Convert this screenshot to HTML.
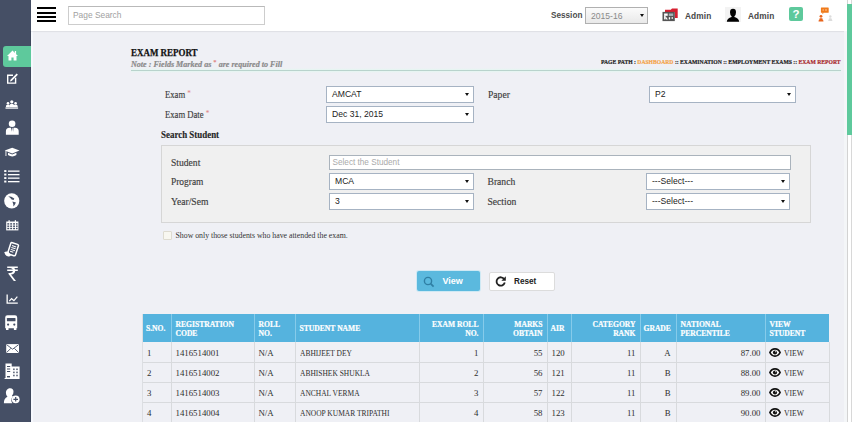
<!DOCTYPE html>
<html><head><meta charset="utf-8">
<style>
*{margin:0;padding:0;box-sizing:border-box}
html,body{width:852px;height:422px;overflow:hidden;background:#eff0f5;font-family:"Liberation Serif",serif;color:#333}
.a{position:absolute}
.sx{display:inline-block;transform-origin:0 0;white-space:nowrap}
#side{left:0;top:0;width:31px;height:422px;background:#454f65}
#top{left:31px;top:0;width:816px;height:31px;background:#fff;box-shadow:0 1px 1px rgba(0,0,0,.06)}
.sans{font-family:"Liberation Sans",sans-serif}
.sel{background:#fff;border:1px solid #a6b3c3;font-family:"Liberation Sans",sans-serif;font-size:8.6px;color:#222;padding-left:5px;line-height:15px;white-space:nowrap}
.sel.dd:after{content:"";position:absolute;right:4px;top:5.8px;border-left:2.1px solid transparent;border-right:2.1px solid transparent;border-top:3.8px solid #111}
.lbl{font-size:9.6px;color:#3d3d3d;white-space:nowrap;line-height:12px;-webkit-text-stroke:0.15px #3d3d3d}
.req{color:#e08080;font-size:8px;vertical-align:2px;-webkit-text-stroke:0}
table{border-collapse:collapse;table-layout:fixed}
th,td{font-family:"Liberation Serif",serif}
th{background:#55b3de;color:#fff;-webkit-text-stroke:0.2px #fff;font-weight:bold;font-size:7.6px;line-height:9px;text-align:left;padding:1px 4px 0 4px;border-right:1px solid #86cbea;height:28px;vertical-align:middle;white-space:nowrap}
td{font-size:8.8px;color:#2e2e2e;height:20px;padding:2px 4px 0 4px;border-right:1px solid #d8dadd;border-bottom:1px solid #d8dadd;white-space:nowrap}
.r{text-align:right}
.c{text-align:center}
.ic{position:absolute;fill:#fff}
</style></head><body>
<div id="side" class="a"></div>
<div class="a" style="left:29.5px;top:31px;width:1.5px;height:391px;background:#3e475b"></div><div class="a" style="left:31px;top:31px;width:2px;height:391px;background:#f6f8fd"></div>
<div class="a" style="left:3px;top:46px;width:28px;height:21px;background:#5ec99c;border-radius:3px 0 0 3px"></div>

<!-- sidebar icons -->
<svg class="ic" style="left:0;top:40px" width="31" height="370" viewBox="0 40 31 370">
 <!-- home -->
 <path d="M12.5 50.5 L18 56 L16.5 56 L16.5 60.5 L13.6 60.5 L13.6 57.6 L11.4 57.6 L11.4 60.5 L8.5 60.5 L8.5 56 L7 56 Z"/>
 <rect x="14.8" y="51" width="1.3" height="3"/>
 <!-- edit -->
 <path d="M7 74.5 h6 v1.4 h-4.6 v6.5 h6.5 v-4.6 h1.4 v6 h-9.3 z"/>
 <path d="M10.5 79.8 l6.2-6.2 l1.2 1.2 l-6.2 6.2 l-1.7 0.5 z"/>
 <!-- group -->
 <circle cx="11.8" cy="101.8" r="1.6"/><circle cx="8" cy="103.2" r="1.3"/><circle cx="15.6" cy="103.2" r="1.3"/>
 <path d="M9.3 107 q0-3.3 2.5-3.3 q2.5 0 2.5 3.3 z"/>
 <path d="M5.8 107 q0-2.4 2.2-2.4 q1.5 0 1.9 1.2 l-0.3 1.2 z"/>
 <path d="M17.8 107 q0-2.4 -2.2-2.4 q-1.5 0 -1.9 1.2 l0.3 1.2 z"/>
 <rect x="5.5" y="107.4" width="12.6" height="1.3"/>
 <!-- user -->
 <circle cx="12.1" cy="123.8" r="3.3"/>
 <path d="M5.9 134.7 v-3.5 q0-3 3.6-3.4 l1.6 0 l0.4 4 l0.6 -4 l0.4 0 l0.6 4 l0.4 -4 l1.6 0 q3.6 0.4 3.6 3.4 v3.5 z"/>
 <!-- grad cap -->
 <path d="M4.7 150.6 L12.2 147.8 L19.5 150.6 L12.2 153.4 Z"/>
 <path d="M8 152.8 v2.3 q4.2 2.6 8.4 0 v-2.3 l-4.2 1.6 z"/>
 <rect x="5.5" y="151" width="0.9" height="5"/>
 <!-- list -->
 <rect x="4.2" y="170.1" width="2.2" height="1.9"/><rect x="8" y="170.5" width="11.5" height="1.3"/>
 <rect x="4.2" y="173.6" width="2.2" height="1.9"/><rect x="8" y="174" width="11.5" height="1.3"/>
 <rect x="4.2" y="177.1" width="2.2" height="1.9"/><rect x="8" y="177.5" width="11.5" height="1.3"/>
 <rect x="4.2" y="180.6" width="2.2" height="1.9"/><rect x="8" y="181" width="11.5" height="1.3"/>
  <!-- globe -->
 <circle cx="11.75" cy="200.8" r="7.6"/>
 <path fill="#454f65" d="M8.2 196.2 L11.3 196.7 L14.3 198.6 L13.6 199.9 L11.6 199.5 L10.6 198.3 Z"/>
 <path fill="#454f65" d="M12.4 201.6 L15.9 202.6 L14.8 204.8 L13.4 206.4 L13.3 204.3 Z"/>
<!-- calendar -->
 <path d="M6.2 221.5 h12.2 v8.9 h-12.2 z" />
 <g fill="#454f65">
 <rect x="7.3" y="223.2" width="1.9" height="1.4"/><rect x="10.2" y="223.2" width="1.9" height="1.4"/><rect x="13.1" y="223.2" width="1.9" height="1.4"/><rect x="16" y="223.2" width="1.6" height="1.4"/>
 <rect x="7.3" y="225.5" width="1.9" height="1.4"/><rect x="10.2" y="225.5" width="1.9" height="1.4"/><rect x="13.1" y="225.5" width="1.9" height="1.4"/><rect x="16" y="225.5" width="1.6" height="1.4"/>
 <rect x="7.3" y="227.8" width="1.9" height="1.4"/><rect x="10.2" y="227.8" width="1.9" height="1.4"/><rect x="13.1" y="227.8" width="1.9" height="1.4"/><rect x="16" y="227.8" width="1.6" height="1.4"/>
 </g>
 <rect x="8.5" y="220.2" width="1.2" height="2"/><rect x="14.8" y="220.2" width="1.2" height="2"/>
  <!-- scroll doc -->
 <g transform="rotate(18 13 249.5)">
  <rect x="9" y="243.2" width="8" height="12" rx="1.3" fill="none" stroke="#fff" stroke-width="1.5"/>
  <rect x="10.8" y="245.6" width="4.4" height="1"/><rect x="10.8" y="247.6" width="4.4" height="1"/><rect x="10.8" y="249.6" width="4.4" height="1"/><rect x="10.8" y="251.6" width="3.4" height="1"/>
 </g>
 <path d="M4.2 252.3 q1.8 -1.4 4.2 -0.6 l2.6 3.2 q-0.8 1.8 -2.8 1.6 q-2.8 -0.4 -4 -4.2 z"/>
<!-- rupee -->
 <path d="M7.2 266.6 h10.6 v1.4 h-3.6 q0.8 0.7 1 1.6 h2.6 v1.4 h-2.6 q-0.4 3.2 -4.2 3.5 l5 6.6 h-2.2 l-5.3 -7 v-1 h1.7 q2.4 0 2.8 -2.1 h-5.8 v-1.4 h5.6 q-0.6 -1.4 -2.6 -1.6 h-3 z"/>
 <!-- chart -->
 <path d="M6.5 294.4 h1.3 v8.2 h10 v1.2 h-11.3 z"/>
 <path d="M8.8 300.8 l2.7-3 l2.4 2 l3-3.6 l0.9 0.8 l-3.8 4.5 l-2.4 -2 l-1.9 2.1 z"/>
  <!-- bus -->
 <path d="M7.4 315.2 h7.6 q2.2 0 2.2 2.2 v10.8 h-0.8 v1.8 h-2.5 v-1.8 h-5.4 v1.8 h-2.5 v-1.8 h-0.8 v-10.8 q0-2.2 2.2-2.2 z"/>
 <rect fill="#454f65" x="6.9" y="317.9" width="8.6" height="3.4" rx="0.6"/>
 <circle fill="#454f65" cx="8.1" cy="324.6" r="1.1"/><circle fill="#454f65" cx="14.3" cy="324.6" r="1.1"/>
<!-- envelope -->
 <path d="M6.2 344.1 h12.8 v8.9 h-12.8 z"/>
 <path fill="none" stroke="#454f65" stroke-width="0.9" d="M6.5 344.6 l6.1 4.6 l6.1 -4.6 M6.5 352.6 l4.3 -4.2 M18.7 352.6 l-4.3 -4.2"/>
 <!-- building -->
 <path d="M5.5 363.5 h6.2 v3 h7.9 v12.6 h-15 v-1.2 h0.9 z"/>
 <g fill="#454f65"><rect x="7" y="366" width="3.2" height="1"/><rect x="7" y="368.5" width="3.2" height="1"/><rect x="7" y="371" width="3.2" height="1"/><rect x="7" y="376" width="3" height="1.4"/>
 <rect x="13.2" y="368.5" width="1.4" height="1.6"/><rect x="16.3" y="368.5" width="1.4" height="1.6"/><rect x="13.2" y="371.6" width="1.4" height="1.6"/><rect x="16.3" y="371.6" width="1.4" height="1.6"/><rect x="13.2" y="374.7" width="1.4" height="1.6"/><rect x="16.3" y="374.7" width="1.4" height="1.6"/></g>
 <!-- user add -->
 <path d="M10.2 388.2 q3.3 0 3.3 3.6 q0 2.6 -1.6 4 l1 0.6 q-1.6 1.6 -1.6 3.8 q0 1.7 1 3 h-8.4 q-0.2 -4.6 3.6 -6.4 q-1.6 -1.4 -1.6 -4 q0 -3.6 3.3 -4.6 z"/>
 <circle cx="15.7" cy="399.3" r="3.9"/>
 <path fill="#454f65" d="M15.1 397 h1.2 v1.7 h1.7 v1.2 h-1.7 v1.7 h-1.2 v-1.7 h-1.7 v-1.2 h1.7 z"/>
</svg>

<div id="top" class="a"></div>
<!-- hamburger -->
<div class="a" style="left:37px;top:7.3px;width:19px;height:2px;background:#000"></div>
<div class="a" style="left:37px;top:11.6px;width:19px;height:2px;background:#000"></div>
<div class="a" style="left:37px;top:16px;width:19px;height:2px;background:#000"></div>
<div class="a" style="left:37px;top:20.4px;width:19px;height:2px;background:#000"></div>
<div class="a sans" style="left:68px;top:6px;width:197px;height:19px;border:1px solid #cdcdcd;border-top-color:#b9b9b9;font-size:8.4px;color:#a0a0a0;padding-left:4px;line-height:17px">Page Search</div>

<div class="a sans" style="left:551px;top:9.5px;font-size:8.2px;font-weight:bold;color:#4d4d4d;line-height:12px">Session</div>
<div class="a sans" style="left:585px;top:7px;width:63px;height:17px;border:1px solid #b0b0b0;background:linear-gradient(#fbfbfb,#e9e9e9);font-size:8.6px;color:#8a8a8a;padding-left:5px;line-height:16px">2015-16</div>
<div class="a" style="left:639.5px;top:13.5px;border-left:2px solid transparent;border-right:2px solid transparent;border-top:3.5px solid #111"></div>

<!-- school/bus icon -->
<svg class="a" style="left:660px;top:6px" width="22" height="18" viewBox="660 6 22 18">
 <path fill="#d61f30" d="M665 11.9 v-2.2 h5.8 l1.2 -1.1 h5.7 v9.3 h-2.9 v-6 z"/>
 <rect fill="#555" x="662.5" y="11.9" width="12.3" height="9.2"/>
 <rect fill="#fff" x="664.1" y="13.5" width="3.6" height="2.3"/>
 <rect fill="#fff" x="664.1" y="15.6" width="1.5" height="3.8"/>
 <path fill="#fff" d="M666.2 17 l1.6 2.6 h-1.5 l-1.2 -2 z"/>
 <rect fill="#a9b3b8" x="668.8" y="13.5" width="4.4" height="2.4"/>
 <rect fill="#fff" x="668.8" y="17.2" width="1.3" height="2.2"/><rect fill="#fff" x="671.6" y="17.2" width="1.3" height="1.6"/>
</svg>
<div class="a sans" style="left:685px;top:9.5px;font-size:8.3px;font-weight:bold;color:#474747;line-height:12px;letter-spacing:0.1px">Admin</div>
<!-- user silhouette -->
<div class="a" style="left:725px;top:7px;width:16px;height:15px;background:#f3f3f3"></div>
<svg class="a" style="left:725px;top:7px" width="16" height="15" viewBox="0 0 16 15">
 <path fill="#000" d="M8 1.8 q3 0 3 3.4 q0 2.6 -1.6 4 l0 0.8 q4.3 1 4.8 4.7 h-12.4 q0.5 -3.7 4.8 -4.7 l0 -0.8 q-1.6 -1.4 -1.6 -4 q0 -3.4 3 -3.4 z"/>
</svg>
<div class="a sans" style="left:748px;top:9.5px;font-size:8.3px;font-weight:bold;color:#474747;line-height:12px;letter-spacing:0.1px">Admin</div>
<div class="a" style="left:789px;top:7px;width:14px;height:14px;background:#5ec99c;border-radius:2px;color:#fff;font:bold 11.5px 'Liberation Sans',sans-serif;text-align:center;line-height:14px">?</div>
<!-- orange icon -->
<svg class="a" style="left:816px;top:6px" width="20" height="17" viewBox="816 6 20 17">
 <rect fill="#f07a1a" x="820.9" y="7.4" width="7.8" height="5.3" rx="0.5"/>
 <path fill="#f07a1a" d="M822.3 12.5 l0.2 1.8 l1.6 -1.8 z"/>
 <path fill="#f6a05a" d="M822.5 9 h1.5 v2 h-1.5z M825 9 h2 v2 h-2z"/>
 <circle fill="#e8651c" cx="821" cy="16.3" r="1.4"/>
 <path fill="#e8651c" d="M818.5 21.5 q0 -1.8 1.3 -2.5 l-0.5 -0.8 h3.4 l-0.5 0.8 q1.3 0.7 1.3 2.5 z"/>
 <circle fill="#dcdcdc" cx="830.3" cy="16.5" r="1.2"/>
 <path fill="#dcdcdc" d="M828.2 21.1 q0 -1.6 1 -2.3 l-0.3 -0.6 h2.8 l-0.3 0.6 q1 0.7 1 2.3 z"/>
</svg>

<!-- scrollbar -->
<div class="a" style="left:843.5px;top:31px;width:3.5px;height:391px;background:#f4f6f8"></div>
<div class="a" style="left:847px;top:0;width:5px;height:422px;background:#fff"></div>
<div class="a" style="left:847px;top:0;width:1px;height:422px;background:#d3d3d3"></div>
<div class="a" style="left:851px;top:0;width:1px;height:422px;background:#d8d8d8"></div>
<div class="a" style="left:847px;top:4px;width:5px;height:131px;background:#5ec99c"></div>
<!-- title -->
<div class="a" style="left:131px;top:47.3px;font-size:10px;font-weight:bold;color:#111;line-height:12px;-webkit-text-stroke:0.25px #111"><span class="sx" style="transform:scaleX(.895)">EXAM REPORT</span></div>
<div class="a" style="left:131px;top:57.4px;font-size:8.6px;font-style:italic;font-weight:bold;color:#8a8a8a;line-height:11px;-webkit-text-stroke:0.2px #8a8a8a"><span class="sx" style="transform:scaleX(.94)">Note : Fields Marked as <span class="req" style="font-size:7px;vertical-align:3px;font-style:normal">*</span> are required to Fill</span></div>
<div class="a" style="left:131px;top:68px;width:710px;height:5px;background:linear-gradient(rgba(230,246,242,0),#e4f6f1 40%,#e4f6f1 60%,rgba(230,246,242,0))"></div><div class="a" style="left:131px;top:70px;width:710px;height:1px;background:#b8d3cc"></div>
<div class="a" style="left:600.5px;top:58px;font-size:6.6px;font-weight:bold;color:#222;line-height:8px;white-space:nowrap;-webkit-text-stroke:0.2px currentColor"><span class="sx" style="transform:scaleX(.858)">PAGE PATH : <span style="color:#f4a347">DASHBOARD</span> :: EXAMINATION :: EMPLOYMENT EXAMS :: <span style="color:#a8282c">EXAM REPORT</span></span></div>

<!-- form -->
<div class="a lbl" style="left:164.5px;top:88.4px"><span class="sx" style="transform:scaleX(.9)">Exam <span class="req">*</span></span></div>
<div class="a sel dd" style="left:326px;top:86px;width:148px;height:17px">AMCAT</div>
<div class="a lbl" style="left:488px;top:88.5px"><span class="sx" style="transform:scaleX(1)">Paper</span></div>
<div class="a sel dd" style="left:649px;top:86px;width:147px;height:17px">P2</div>
<div class="a lbl" style="left:164.5px;top:108.4px"><span class="sx" style="transform:scaleX(.9)">Exam Date <span class="req">*</span></span></div>
<div class="a sel dd" style="left:326px;top:106px;width:148px;height:17px">Dec 31, 2015</div>
<div class="a lbl" style="left:161px;top:129px;font-weight:bold;color:#222"><span class="sx" style="transform:scaleX(.93)">Search Student</span></div>

<div class="a" style="left:161px;top:145px;width:650px;height:78px;background:#f0f0f0;border:1px solid #d6d6d6"></div>
<div class="a lbl" style="left:171px;top:156.7px"><span class="sx" style="transform:scaleX(1)">Student</span></div>
<div class="a sel" style="left:329px;top:155px;width:462px;height:15px;color:#aaa;line-height:14px;padding-left:2.5px;font-size:8.2px;border-color:#aab3bc">Select the Student</div>
<div class="a lbl" style="left:171px;top:175.7px"><span class="sx" style="transform:scaleX(.98)">Program</span></div>
<div class="a sel dd" style="left:329px;top:173px;width:145px;height:17px">MCA</div>
<div class="a lbl" style="left:487.5px;top:175.7px"><span class="sx" style="transform:scaleX(1)">Branch</span></div>
<div class="a sel dd" style="left:646px;top:173px;width:144px;height:17px">---Select---</div>
<div class="a lbl" style="left:171px;top:195.7px"><span class="sx" style="transform:scaleX(1)">Year/Sem</span></div>
<div class="a sel dd" style="left:329px;top:193px;width:145px;height:17px">3</div>
<div class="a lbl" style="left:487.5px;top:195.7px"><span class="sx" style="transform:scaleX(1)">Section</span></div>
<div class="a sel dd" style="left:646px;top:193px;width:144px;height:17px">---Select---</div>

<div class="a" style="left:163px;top:231px;width:9px;height:9px;border:1px solid #dedbd0;background:#f8f7f0;border-radius:1px"></div>
<div class="a" style="left:175.5px;top:230.5px;font-size:7.8px;color:#333;line-height:10px;white-space:nowrap">Show only those students who have attended the exam.</div>

<!-- buttons -->
<div class="a sans" style="left:417px;top:271px;width:63px;height:20px;background:#5bb9de;border-radius:2px;box-shadow:0 0 0 1px #cfe9f4"></div>
<svg class="a" style="left:422px;top:275px" width="14" height="14" viewBox="0 0 14 14">
 <circle cx="6" cy="6" r="3.6" fill="none" stroke="#2f7fa4" stroke-width="1.4"/>
 <path d="M8.6 8.6 l3 3" stroke="#2f7fa4" stroke-width="1.6"/>
</svg>
<div class="a sans" style="left:442.5px;top:275px;color:#fff;font-weight:bold;font-size:9px;line-height:12px">View</div>
<div class="a" style="left:488.5px;top:271.5px;width:66px;height:19.5px;background:#fff;border:1px solid #dcdcdc;border-radius:2px"></div>
<svg class="a" style="left:494px;top:274px" width="14" height="14" viewBox="0 0 14 14">
 <path d="M10.3 5.2 A4.2 4.2 0 1 0 10.8 8.6" fill="none" stroke="#222" stroke-width="1.8"/>
 <path d="M11.8 2.3 v4.4 h-4.4 z" fill="#222"/>
</svg>
<div class="a sans" style="left:514px;top:275px;color:#222;font-weight:bold;font-size:9px;line-height:12px"><span class="sx" style="transform:scaleX(.91)">Reset</span></div>

<!-- table -->
<div class="a" style="left:142px;top:314px;width:1px;height:108px;background:#dcdee2"></div>
<table class="a" style="left:143px;top:314px;width:686px">
<colgroup><col style="width:28px"><col style="width:83px"><col style="width:41px"><col style="width:124px"><col style="width:64px"><col style="width:64px"><col style="width:24px"><col style="width:69px"><col style="width:36px"><col style="width:89px"><col style="width:64px"></colgroup>
<tr><th style="padding-left:3px">S.NO.</th><th>REGISTRATION<br>CODE</th><th>ROLL<br>NO.</th><th>STUDENT NAME</th><th class="r">EXAM ROLL<br>NO.</th><th class="r">MARKS<br>OBTAIN</th><th style="padding-left:3px">AIR</th><th class="r">CATEGORY<br>RANK</th><th style="padding-left:3px">GRADE</th><th>NATIONAL<br>PERCENTILE</th><th style="border-right:0">VIEW<br>STUDENT</th></tr>
<tr><td>1</td><td>1416514001</td><td>N/A</td><td><span class="sx" style="transform:scaleX(.85)">ABHIJEET DEY</span></td><td class="r">1</td><td class="r">55</td><td>120</td><td class="r">11</td><td class="r" style="padding-right:5px">A</td><td class="r">87.00</td><td class="v" style="padding-left:3px"><svg width="12" height="9" viewBox="0 0 12 9" style="vertical-align:-1px;margin-right:3.5px"><path d="M0.9 4.5 Q2.5 0.9 6 0.9 Q9.5 0.9 11.1 4.5 Q9.5 8.1 6 8.1 Q2.5 8.1 0.9 4.5 Z" fill="#fff" stroke="#111" stroke-width="1.7"/><circle cx="6" cy="4.5" r="2.1" fill="#111"/><circle cx="6.8" cy="3.7" r="0.6" fill="#fff"/></svg><span class="sx" style="transform:scaleX(.87)">VIEW</span></td></tr>
<tr><td>2</td><td>1416514002</td><td>N/A</td><td><span class="sx" style="transform:scaleX(.85)">ABHISHEK SHUKLA</span></td><td class="r">2</td><td class="r">56</td><td>121</td><td class="r">11</td><td class="r" style="padding-right:5px">B</td><td class="r">88.00</td><td class="v" style="padding-left:3px"><svg width="12" height="9" viewBox="0 0 12 9" style="vertical-align:-1px;margin-right:3.5px"><path d="M0.9 4.5 Q2.5 0.9 6 0.9 Q9.5 0.9 11.1 4.5 Q9.5 8.1 6 8.1 Q2.5 8.1 0.9 4.5 Z" fill="#fff" stroke="#111" stroke-width="1.7"/><circle cx="6" cy="4.5" r="2.1" fill="#111"/><circle cx="6.8" cy="3.7" r="0.6" fill="#fff"/></svg><span class="sx" style="transform:scaleX(.87)">VIEW</span></td></tr>
<tr><td>3</td><td>1416514003</td><td>N/A</td><td><span class="sx" style="transform:scaleX(.85)">ANCHAL VERMA</span></td><td class="r">3</td><td class="r">57</td><td>122</td><td class="r">11</td><td class="r" style="padding-right:5px">B</td><td class="r">89.00</td><td class="v" style="padding-left:3px"><svg width="12" height="9" viewBox="0 0 12 9" style="vertical-align:-1px;margin-right:3.5px"><path d="M0.9 4.5 Q2.5 0.9 6 0.9 Q9.5 0.9 11.1 4.5 Q9.5 8.1 6 8.1 Q2.5 8.1 0.9 4.5 Z" fill="#fff" stroke="#111" stroke-width="1.7"/><circle cx="6" cy="4.5" r="2.1" fill="#111"/><circle cx="6.8" cy="3.7" r="0.6" fill="#fff"/></svg><span class="sx" style="transform:scaleX(.87)">VIEW</span></td></tr>
<tr><td>4</td><td>1416514004</td><td>N/A</td><td><span class="sx" style="transform:scaleX(.85)">ANOOP KUMAR TRIPATHI</span></td><td class="r">4</td><td class="r">58</td><td>123</td><td class="r">11</td><td class="r" style="padding-right:5px">B</td><td class="r">90.00</td><td class="v" style="padding-left:3px"><svg width="12" height="9" viewBox="0 0 12 9" style="vertical-align:-1px;margin-right:3.5px"><path d="M0.9 4.5 Q2.5 0.9 6 0.9 Q9.5 0.9 11.1 4.5 Q9.5 8.1 6 8.1 Q2.5 8.1 0.9 4.5 Z" fill="#fff" stroke="#111" stroke-width="1.7"/><circle cx="6" cy="4.5" r="2.1" fill="#111"/><circle cx="6.8" cy="3.7" r="0.6" fill="#fff"/></svg><span class="sx" style="transform:scaleX(.87)">VIEW</span></td></tr>
</table>
</body></html>
